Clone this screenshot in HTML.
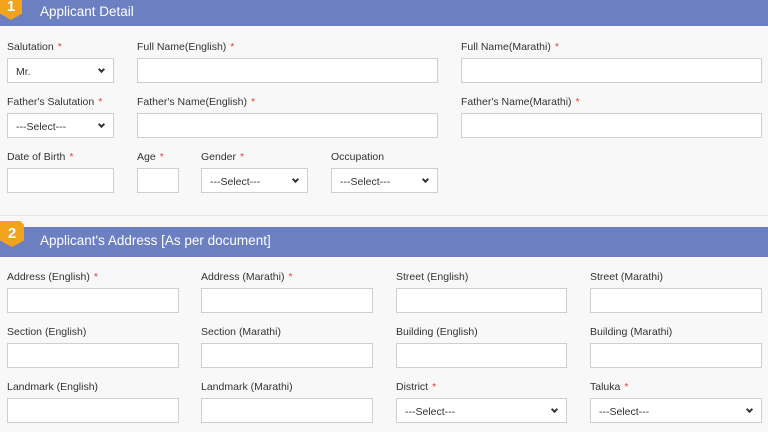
<!DOCTYPE html>
<html><head><style>
*{box-sizing:border-box;margin:0;padding:0}
body{width:768px;height:432px;overflow:hidden;background:#f8f8f8;font-family:"Liberation Sans",Arial,sans-serif;position:relative;color:#333}
.bar{position:absolute;left:0;width:768px;background:#6c7fc1;color:#fff;font-size:13.5px}
.bar span{position:absolute;left:40px}
.lbl{position:absolute;font-size:10.5px;color:#333;white-space:nowrap}
.lbl b{color:#e04040;font-weight:normal;margin-left:4px}
.in{position:absolute;height:25px;background:#fff;border:1px solid #cfcfcf}
.sel{position:absolute;height:25px;background:#fff;border:1px solid #cfcfcf;font-size:10.5px;padding:7px 0 0 8px;color:#333}
.sel:after{content:"";position:absolute;right:9px;top:8px;width:3px;height:3px;border-right:2px solid #333;border-bottom:2px solid #333;transform:rotate(45deg)}
.badge{position:absolute;background:#f2a31c;color:#fff;font-weight:bold;font-size:15px;text-align:center}
</style></head><body>
<div class="bar" style="top:0;height:26px"><span style="top:4px">Applicant Detail</span></div>
<div class="badge" style="left:0;top:-6px;width:22px;height:26px;clip-path:polygon(0 0,100% 0,100% 75%,50% 100%,0 75%);line-height:26px">1</div>

<div class="lbl" style="left:7px;top:41px">Salutation<b>*</b></div>
<div class="lbl" style="left:137px;top:41px">Full Name(English)<b>*</b></div>
<div class="lbl" style="left:461px;top:41px">Full Name(Marathi)<b>*</b></div>
<div class="sel" style="left:7px;top:58px;width:107px">Mr.</div>
<div class="in" style="left:137px;top:58px;width:301px"></div>
<div class="in" style="left:461px;top:58px;width:301px"></div>

<div class="lbl" style="left:7px;top:96px">Father's Salutation<b>*</b></div>
<div class="lbl" style="left:137px;top:96px">Father's Name(English)<b>*</b></div>
<div class="lbl" style="left:461px;top:96px">Father's Name(Marathi)<b>*</b></div>
<div class="sel" style="left:7px;top:113px;width:107px">---Select---</div>
<div class="in" style="left:137px;top:113px;width:301px"></div>
<div class="in" style="left:461px;top:113px;width:301px"></div>

<div class="lbl" style="left:7px;top:151px">Date of Birth<b>*</b></div>
<div class="lbl" style="left:137px;top:151px">Age<b>*</b></div>
<div class="lbl" style="left:201px;top:151px">Gender<b>*</b></div>
<div class="lbl" style="left:331px;top:151px">Occupation</div>
<div class="in" style="left:7px;top:168px;width:107px"></div>
<div class="in" style="left:137px;top:168px;width:42px"></div>
<div class="sel" style="left:201px;top:168px;width:107px">---Select---</div>
<div class="sel" style="left:331px;top:168px;width:107px">---Select---</div>

<div style="position:absolute;left:0;top:215px;width:768px;height:1px;background:#e6e6e6"></div>
<div class="bar" style="top:227px;height:30px"><span style="top:6px">Applicant's Address [As per document]</span></div>
<div class="badge" style="left:0;top:221px;width:24px;height:26px;clip-path:polygon(0 0,85% 0,100% 15%,100% 75%,50% 100%,0 75%);line-height:26px">2</div>

<div class="lbl" style="left:7px;top:271px">Address (English)<b>*</b></div>
<div class="lbl" style="left:201px;top:271px">Address (Marathi)<b>*</b></div>
<div class="lbl" style="left:396px;top:271px">Street (English)</div>
<div class="lbl" style="left:590px;top:271px">Street (Marathi)</div>
<div class="in" style="left:7px;top:288px;width:172px"></div>
<div class="in" style="left:201px;top:288px;width:172px"></div>
<div class="in" style="left:396px;top:288px;width:171px"></div>
<div class="in" style="left:590px;top:288px;width:172px"></div>

<div class="lbl" style="left:7px;top:326px">Section (English)</div>
<div class="lbl" style="left:201px;top:326px">Section (Marathi)</div>
<div class="lbl" style="left:396px;top:326px">Building (English)</div>
<div class="lbl" style="left:590px;top:326px">Building (Marathi)</div>
<div class="in" style="left:7px;top:343px;width:172px"></div>
<div class="in" style="left:201px;top:343px;width:172px"></div>
<div class="in" style="left:396px;top:343px;width:171px"></div>
<div class="in" style="left:590px;top:343px;width:172px"></div>

<div class="lbl" style="left:7px;top:381px">Landmark (English)</div>
<div class="lbl" style="left:201px;top:381px">Landmark (Marathi)</div>
<div class="lbl" style="left:396px;top:381px">District<b>*</b></div>
<div class="lbl" style="left:590px;top:381px">Taluka<b>*</b></div>
<div class="in" style="left:7px;top:398px;width:172px"></div>
<div class="in" style="left:201px;top:398px;width:172px"></div>
<div class="sel" style="left:396px;top:398px;width:171px">---Select---</div>
<div class="sel" style="left:590px;top:398px;width:172px">---Select---</div>
</body></html>
